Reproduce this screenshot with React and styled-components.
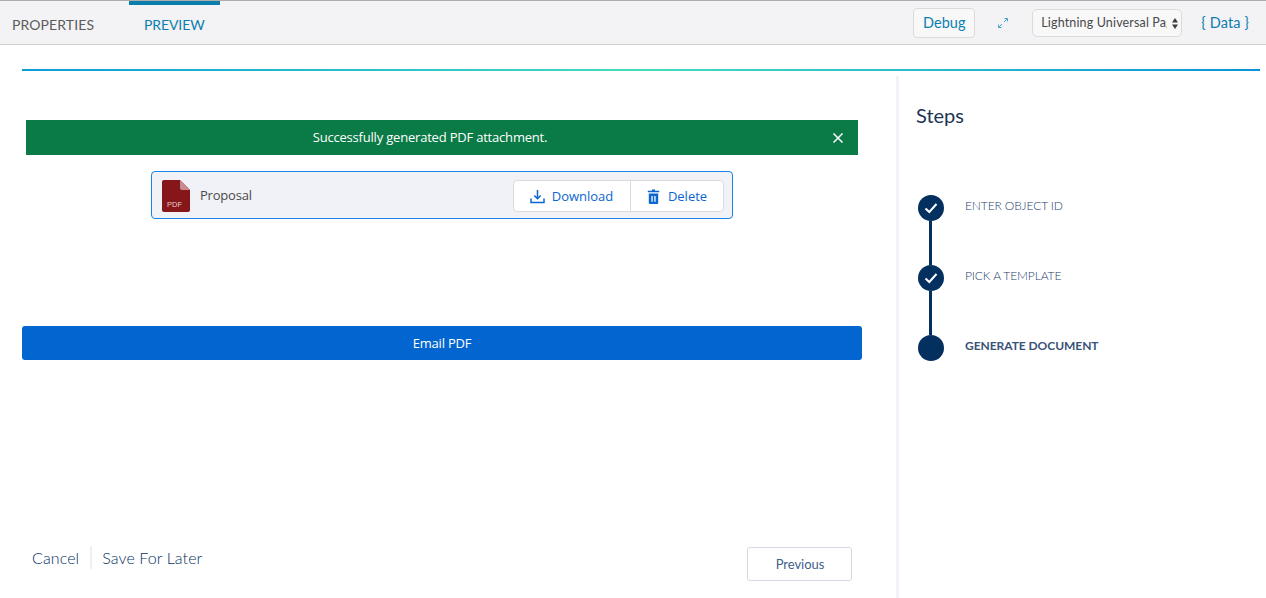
import styled, { createGlobalStyle } from "styled-components";

const GlobalStyle = createGlobalStyle`
  html, body { margin: 0; padding: 0; background: #fff; }
  body { font-family: "Lato", "Open Sans", sans-serif; }
`;

const Page = styled.div`
  width: 1266px;
  height: 598px;
  overflow: hidden;
  display: flex;
  flex-direction: column;
`;

const TopBar = styled.header`
  box-sizing: border-box;
  height: 45px;
  flex: none;
  display: flex;
  align-items: stretch;
  background: #f3f2f4;
  border-top: 1px solid #b0adab;
  border-bottom: 1px solid #cfcdcd;
  padding-left: 12px;
`;

const Tab = styled.div`
  box-sizing: border-box;
  width: ${({ width }) => width}px;
  padding-left: ${({ inset }) => inset || 0}px;
  padding-bottom: 1px;
  display: flex;
  align-items: center;
  font-size: 14px;
  letter-spacing: ${({ active }) => (active ? "-0.1px" : "0.1px")};
  color: ${({ active }) => (active ? "#0a7fae" : "#5c5c5c")};
  border-top: 4px solid ${({ active }) => (active ? "#0a7fae" : "transparent")};
`;

const BarActions = styled.div`
  margin-left: auto;
  display: flex;
  align-items: center;
  padding: 0 17px 0 0;
`;

const DebugButton = styled.button`
  box-sizing: border-box;
  width: 62px;
  height: 30px;
  padding: 0;
  margin-right: 23px;
  background: #f8f8f9;
  border: 1px solid #dddbda;
  border-radius: 4px;
  font: inherit;
  font-size: 14.5px;
  color: #0a7fae;
`;

const ExpandIcon = styled.svg`
  width: 10px;
  height: 10px;
  margin-right: 24px;
  color: #4aa5cd;
`;

const SelectBox = styled.div`
  box-sizing: border-box;
  width: 150px;
  height: 28px;
  margin-right: 19px;
  padding: 0 14px 0 8px;
  position: relative;
  display: flex;
  align-items: center;
  background: #f8f8f9;
  border: 1px solid #dddbda;
  border-radius: 5px;
  font-size: 12.5px;
  letter-spacing: 0.15px;
  color: #4a4a4a;
`;

const SelectText = styled.span`
  flex: 1;
  overflow: hidden;
  white-space: nowrap;
`;

const SelectArrows = styled.svg`
  position: absolute;
  right: 3px;
  top: 8px;
  width: 6px;
  height: 11px;
  color: #3e3e3c;
`;

const DataLink = styled.span`
  font-size: 14.5px;
  letter-spacing: 0.15px;
  color: #0a7fae;
`;

const Content = styled.main`
  flex: 1;
  min-height: 0;
  padding: 24px 6px 0 22px;
  display: flex;
  flex-direction: column;
`;

const GradientRule = styled.div`
  height: 2px;
  flex: none;
  background: linear-gradient(90deg, #0b9dd8 0%, #45dcbc 50%, #0a94d9 100%);
`;

const Columns = styled.div`
  flex: 1;
  min-height: 0;
  margin-top: 5px;
  display: flex;
`;

const LeftColumn = styled.section`
  box-sizing: border-box;
  width: 874px;
  flex: none;
  padding: 44px 34px 17px 0;
  display: flex;
  flex-direction: column;
`;

const Banner = styled.div`
  box-sizing: border-box;
  width: 832px;
  height: 35px;
  margin-left: 4px;
  padding: 0 24px 1px 0;
  position: relative;
  display: flex;
  align-items: center;
  justify-content: center;
  background: #0a7a46;
  color: #fff;
  font-family: "Open Sans", sans-serif;
  font-size: 13px;
  letter-spacing: -0.2px;
`;

const CloseIcon = styled.svg`
  position: absolute;
  right: 14px;
  top: 12px;
  width: 12px;
  height: 12px;
  color: #fff;
`;

const Attachment = styled.div`
  box-sizing: border-box;
  width: 582px;
  height: 48px;
  margin: 16px 0 0 129px;
  padding: 2px 8px 0 10px;
  display: flex;
  align-items: center;
  background: #f0f2f7;
  border: 1px solid #1b82e6;
  border-radius: 4px;
`;

const FileIcon = styled.svg`
  width: 28px;
  height: 32px;
  flex: none;
  margin-right: 10px;
`;

const FileName = styled.span`
  margin-bottom: 2px;
  font-family: "Open Sans", sans-serif;
  font-size: 13px;
  letter-spacing: -0.2px;
  color: #4a4a4a;
`;

const ButtonGroup = styled.div`
  margin-left: auto;
  height: 32px;
  box-sizing: border-box;
  display: flex;
  background: #fff;
  border: 1px solid #dddbda;
  border-radius: 4px;
`;

const GroupButton = styled.button`
  box-sizing: border-box;
  width: ${({ width }) => width}px;
  padding: 0 1px 0 0;
  display: flex;
  align-items: center;
  justify-content: center;
  gap: 7px;
  background: none;
  border: none;
  border-left: ${({ divided }) => (divided ? "1px solid #dddbda" : "none")};
  font-family: "Open Sans", sans-serif;
  font-size: 13px;
  color: #0b66cf;
`;

const GroupIcon = styled.svg`
  width: 15px;
  height: 15px;
  color: #0b66cf;
`;

const EmailButton = styled.button`
  width: 840px;
  height: 34px;
  margin-top: 107px;
  padding: 0;
  background: #0366d0;
  border: none;
  border-radius: 3px;
  color: #fff;
  font-family: "Open Sans", sans-serif;
  font-size: 13px;
  letter-spacing: -0.2px;
`;

const Footer = styled.div`
  margin-top: auto;
  padding: 0 10px;
  display: flex;
  align-items: center;
  justify-content: space-between;
`;

const FooterLinks = styled.div`
  display: flex;
  align-items: center;
  font-size: 16px;
  font-weight: 300;
  letter-spacing: 0.1px;
  color: #04305f;
  padding-bottom: 12px;
`;

const FooterLink = styled.span`
  padding: 2px 11px 2px 0;
  & + & {
    padding-left: 10px;
    border-left: 2px solid #eef0f5;
  }
`;

const PreviousButton = styled.button`
  box-sizing: border-box;
  width: 105px;
  height: 34px;
  padding: 0 0 0 1px;
  background: #fff;
  border: 1px solid #d5d9e3;
  border-radius: 3px;
  color: #3f5f8a;
  font-family: "Lato", sans-serif;
  font-size: 13px;
  font-weight: 400;
  letter-spacing: -0.05px;
`;

const StepsPanel = styled.aside`
  flex: 1;
  padding: 27px 0 0 17px;
  border-left: 3px solid #f2f3f9;
`;

const StepsTitle = styled.h2`
  margin: 0 0 68px;
  font-size: 20px;
  line-height: 24px;
  font-weight: 400;
  color: #1c3454;
`;

const StepRow = styled.div`
  display: flex;
  align-items: flex-start;
  margin-left: 2px;
`;

const StepRail = styled.div`
  width: 26px;
  flex: none;
  margin-right: 21px;
  display: flex;
  flex-direction: column;
`;

const StepDot = styled.div`
  width: 26px;
  height: 26px;
  border-radius: 50%;
  background: #04305f;
  display: flex;
  align-items: center;
  justify-content: center;
`;

const StepLine = styled.div`
  width: 3px;
  height: 44px;
  margin-left: 11px;
  background: #04305f;
`;

const CheckIcon = styled.svg`
  width: 14px;
  height: 14px;
  color: #fff;
`;

const StepLabel = styled.span`
  font-size: 12px;
  line-height: 22px;
  font-weight: ${({ current }) => (current ? 700 : 300)};
  letter-spacing: ${({ current }) => (current ? "-0.05px" : "-0.1px")};
  color: ${({ current }) => (current ? "#3a5279" : "#26406e")};
`;

const steps = [
  { label: "ENTER OBJECT ID", done: true },
  { label: "PICK A TEMPLATE", done: true },
  { label: "GENERATE DOCUMENT", done: false },
];

export default function App() {
  return (
    <>
      <GlobalStyle />
      <Page>
        <TopBar>
          <Tab width={117}>PROPERTIES</Tab>
          <Tab width={91} inset={15} active>
            PREVIEW
          </Tab>
          <BarActions>
            <DebugButton>Debug</DebugButton>
            <ExpandIcon viewBox="0 0 10 10" fill="none" stroke="currentColor" strokeWidth="1">
              <path d="M6 4 9.5 0.5M6.5 0.5H9.5V3.5M4 6 0.5 9.5M0.5 6.5V9.5H3.5" />
            </ExpandIcon>
            <SelectBox>
              <SelectText>Lightning Universal Page</SelectText>
              <SelectArrows viewBox="0 0 6 11" fill="currentColor">
                <path d="M3 0 6 4.6H0ZM3 11 0 6.4H6Z" />
              </SelectArrows>
            </SelectBox>
            <DataLink>{"{ Data }"}</DataLink>
          </BarActions>
        </TopBar>

        <Content>
          <GradientRule />
          <Columns>
            <LeftColumn>
              <Banner>
                Successfully generated PDF attachment.
                <CloseIcon viewBox="0 0 12 12" fill="none" stroke="currentColor" strokeWidth="1.5">
                  <path d="M1.5 1.5 10.5 10.5M10.5 1.5 1.5 10.5" />
                </CloseIcon>
              </Banner>

              <Attachment>
                <FileIcon viewBox="0 0 28 32">
                  <path d="M2 0H18L28 10V30A2 2 0 0 1 26 32H2A2 2 0 0 1 0 30V2A2 2 0 0 1 2 0Z" fill="#85161a" />
                  <path d="M18 0 28 10H20A2 2 0 0 1 18 8Z" fill="#c98b8d" />
                  <text x="5" y="27" fontFamily="Liberation Sans, sans-serif" fontSize="7.5" fill="#e9cfcf">
                    PDF
                  </text>
                </FileIcon>
                <FileName>Proposal</FileName>
                <ButtonGroup>
                  <GroupButton width={116}>
                    <GroupIcon viewBox="0 0 15 15" fill="none" stroke="currentColor" strokeWidth="1.5">
                      <path d="M7.5 1V9.5M4.3 6.5 7.5 9.7 10.7 6.5" />
                      <path d="M1 9.5V13.5H14V9.5" />
                    </GroupIcon>
                    Download
                  </GroupButton>
                  <GroupButton width={93} divided>
                    <GroupIcon viewBox="0 0 15 15" fill="currentColor">
                      <path d="M6 0.5H9V1.8H13.2V3.3H1.8V1.8H6Z" />
                      <path
                        fillRule="evenodd"
                        d="M2.8 4.6H12.2V14A1 1 0 0 1 11.2 15H3.8A1 1 0 0 1 2.8 14ZM5.4 7V12.8H6.7V7ZM8.3 7V12.8H9.6V7Z"
                      />
                    </GroupIcon>
                    Delete
                  </GroupButton>
                </ButtonGroup>
              </Attachment>

              <EmailButton>Email PDF</EmailButton>

              <Footer>
                <FooterLinks>
                  <FooterLink>Cancel</FooterLink>
                  <FooterLink>Save For Later</FooterLink>
                </FooterLinks>
                <PreviousButton>Previous</PreviousButton>
              </Footer>
            </LeftColumn>

            <StepsPanel>
              <StepsTitle>Steps</StepsTitle>
              {steps.map((step, i) => (
                <StepRow key={step.label}>
                  <StepRail>
                    <StepDot>
                      {step.done && (
                        <CheckIcon viewBox="0 0 14 14" fill="none" stroke="currentColor" strokeWidth="2">
                          <path d="M1.5 7.5 5.3 11 12.5 3" />
                        </CheckIcon>
                      )}
                    </StepDot>
                    {i < steps.length - 1 && <StepLine />}
                  </StepRail>
                  <StepLabel current={!step.done}>{step.label}</StepLabel>
                </StepRow>
              ))}
            </StepsPanel>
          </Columns>
        </Content>
      </Page>
    </>
  );
}
